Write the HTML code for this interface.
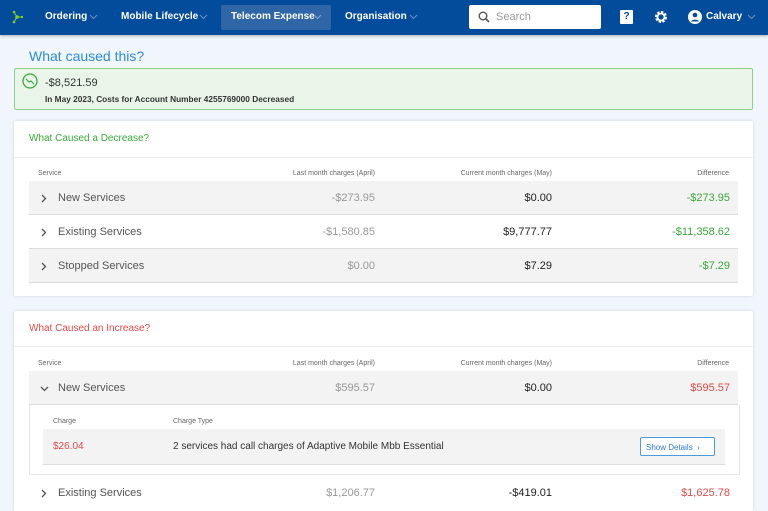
<!DOCTYPE html><html><head><style>
*{box-sizing:border-box;margin:0;padding:0}
body{width:768px;height:499px;overflow:hidden;background:#f0f6fc;font-family:"Liberation Sans",sans-serif;position:relative}
.nav{position:absolute;left:0;top:0;width:768px;height:35px;background:#034b9b;box-shadow:0 1px 3px rgba(0,0,0,.3)}
.nav span{position:absolute;top:11px;color:#fff;font-size:10px;font-weight:bold}
.nav svg.c{position:absolute;top:14px}
.abs{position:absolute}
.card{position:absolute;left:14px;width:739px;background:#fff;box-shadow:0 0 3px rgba(0,0,0,.12);border-radius:2px}
.row{position:absolute;left:15px;width:709px;height:34px;border-bottom:1px solid #dcdcdc;font-size:11px;color:#555}
.g{background:#f3f3f3}
.row div{position:absolute;top:11px}
.row svg{position:absolute;left:12px;top:13px}
.th{position:absolute;font-size:7px;color:#666}
</style></head><body>
<div class="nav">
<svg class="abs" style="left:11px;top:9px" width="12" height="16" viewBox="0 0 12 16"><g fill="#7ed321"><circle cx="6" cy="8" r="1.8"/><circle cx="3" cy="3" r="1.3"/><circle cx="3" cy="13" r="1.3"/><circle cx="11" cy="8" r="1.2"/></g><path d="M3 3L6 8 3 13M6 8H11" stroke="#7ed321" stroke-width="1" fill="none"/></svg>
<span style="left:45px">Ordering</span><svg class="c" style="left:89px" width="9" height="6"><path d="M1 1l3.5 3.5L8 1" stroke="#6d8fc4" fill="none"/></svg>
<span style="left:121px">Mobile Lifecycle</span><svg class="c" style="left:199px" width="9" height="6"><path d="M1 1l3.5 3.5L8 1" stroke="#6d8fc4" fill="none"/></svg>
<div class="abs" style="left:221px;top:5px;width:110px;height:25px;background:#2e66a8;border-radius:2px"></div>
<span style="left:231px">Telecom Expense</span><svg class="c" style="left:313px" width="9" height="6"><path d="M1 1l3.5 3.5L8 1" stroke="#8aa6d2" fill="none"/></svg>
<span style="left:345px">Organisation</span><svg class="c" style="left:409px" width="9" height="6"><path d="M1 1l3.5 3.5L8 1" stroke="#6d8fc4" fill="none"/></svg>
<div class="abs" style="left:469px;top:5px;width:132px;height:24px;background:#fff;border-radius:2px"></div>
<svg class="abs" style="left:478px;top:11px" width="12" height="12" viewBox="0 0 12 12"><circle cx="5" cy="5" r="3.8" fill="none" stroke="#555" stroke-width="1.4"/><path d="M8 8l3 3" stroke="#555" stroke-width="1.6"/></svg>
<span style="left:496px;color:#999;font-weight:normal;top:11px;font-size:11px">Search</span>
<div class="abs" style="left:620px;top:10px;width:13px;height:14px;background:#fff;border-radius:1px;color:#034b9b;font-size:10px;font-weight:bold;text-align:center;line-height:14px">?</div>
<svg class="abs" style="left:654px;top:10px" width="14" height="14" viewBox="0 0 14 14"><circle cx="7" cy="7" r="4.5" fill="none" stroke="#fff" stroke-width="3" stroke-dasharray="2.2 1.3"/><circle cx="7" cy="7" r="3.5" fill="none" stroke="#fff" stroke-width="1.8"/></svg>
<svg class="abs" style="left:688px;top:10px" width="14" height="14" viewBox="0 0 14 14"><circle cx="7" cy="7" r="7" fill="#fff"/><circle cx="7" cy="5" r="2.3" fill="#034b9b"/><path d="M2.8 11.5a5 4 0 0 1 8.4 0" fill="#034b9b"/></svg>
<span style="left:706px">Calvary</span><svg class="c" style="left:747px" width="9" height="6"><path d="M1 1l3.5 3.5L8 1" stroke="#6d8fc4" fill="none"/></svg>
</div>
<div class="abs" style="left:29px;top:48px;font-size:14px;color:#2d8ae0">What caused this?</div>
<div class="abs" style="left:14px;top:68px;width:739px;height:42px;background:#eaf5ea;border:1px solid #8fd08f;border-radius:2px"></div>
<svg class="abs" style="left:22px;top:73px" width="16" height="16" viewBox="0 0 16 16"><circle cx="8" cy="8" r="7" fill="none" stroke="#3aa83a" stroke-width="1.3"/><path d="M4 6l3 3 2-1 3 3" fill="none" stroke="#3aa83a" stroke-width="1.2"/></svg>
<div class="abs" style="left:45px;top:77px;font-size:11px;color:#333">-$8,521.59</div>
<div class="abs" style="left:45px;top:94px;font-size:8.3px;color:#333;font-weight:bold">In May 2023, Costs for Account Number 4255769000 Decreased</div>

<div class="card" style="top:121px;height:175px">
<div class="abs" style="left:15px;top:12px;font-size:10px;color:#3aa83a">What Caused a Decrease?</div>
<div class="abs" style="left:0;top:36px;width:739px;border-top:1px solid #eee"></div>
<div class="th" style="left:24px;top:49px">Service</div><div class="th" style="right:378px;top:49px">Last month charges (April)</div><div class="th" style="right:201px;top:49px">Current month charges (May)</div><div class="th" style="right:24px;top:49px">Difference</div>
<div class="row g" style="top:60px"><svg width="6" height="9"><path d="M1 1l3.5 3.5L1 8" stroke="#555" stroke-width="1.3" fill="none"/></svg><div style="left:29px">New Services</div><div style="right:363px;color:#999">-$273.95</div><div style="right:186px;color:#222">$0.00</div><div style="right:8px;color:#3aa83a">-$273.95</div></div>
<div class="row" style="top:94px"><svg width="6" height="9"><path d="M1 1l3.5 3.5L1 8" stroke="#555" stroke-width="1.3" fill="none"/></svg><div style="left:29px">Existing Services</div><div style="right:363px;color:#999">-$1,580.85</div><div style="right:186px;color:#222">$9,777.77</div><div style="right:8px;color:#3aa83a">-$11,358.62</div></div>
<div class="row g" style="top:128px"><svg width="6" height="9"><path d="M1 1l3.5 3.5L1 8" stroke="#555" stroke-width="1.3" fill="none"/></svg><div style="left:29px">Stopped Services</div><div style="right:363px;color:#999">$0.00</div><div style="right:186px;color:#222">$7.29</div><div style="right:8px;color:#3aa83a">-$7.29</div></div>
</div>

<div class="card" style="top:311px;height:200px">
<div class="abs" style="left:15px;top:12px;font-size:10px;color:#e04a4a">What Caused an Increase?</div>
<div class="abs" style="left:0;top:35px;width:739px;border-top:1px solid #eee"></div>
<div class="th" style="left:24px;top:49px">Service</div><div class="th" style="right:378px;top:49px">Last month charges (April)</div><div class="th" style="right:201px;top:49px">Current month charges (May)</div><div class="th" style="right:24px;top:49px">Difference</div>
<div class="row g" style="top:60px"><svg width="9" height="6" style="left:11px;top:15px"><path d="M1 1l3.5 3.5L8 1" stroke="#555" stroke-width="1.3" fill="none"/></svg><div style="left:29px">New Services</div><div style="right:363px;color:#999">$595.57</div><div style="right:186px;color:#222">$0.00</div><div style="right:8px;color:#e04a4a">$595.57</div></div>
<div class="abs" style="left:15px;top:94px;width:711px;height:70px;border:1px solid #e6e6e6;border-top:none"></div>
<div class="th" style="left:39px;top:107px">Charge</div><div class="th" style="left:159px;top:107px">Charge Type</div>
<div class="abs" style="left:29px;top:118px;width:682px;height:36px;background:#f3f3f3;border-bottom:1px solid #ddd"></div>
<div class="abs" style="left:39px;top:130px;font-size:10px;color:#e04a4a">$26.04</div>
<div class="abs" style="left:159px;top:130px;font-size:10px;color:#333">2 services had call charges of Adaptive Mobile Mbb Essential</div>
<div class="abs" style="left:626px;top:126px;width:75px;height:19px;border:1px solid #4a9be0;border-radius:2px;background:#fff;font-size:8px;color:#2d7ad0;padding:5px 0 0 5px">Show Details &nbsp;›</div>
<div class="row" style="top:165px;border:none"><svg width="6" height="9"><path d="M1 1l3.5 3.5L1 8" stroke="#555" stroke-width="1.3" fill="none"/></svg><div style="left:29px">Existing Services</div><div style="right:363px;color:#999">$1,206.77</div><div style="right:186px;color:#222">-$419.01</div><div style="right:8px;color:#e04a4a">$1,625.78</div></div>
</div>
</body></html>
